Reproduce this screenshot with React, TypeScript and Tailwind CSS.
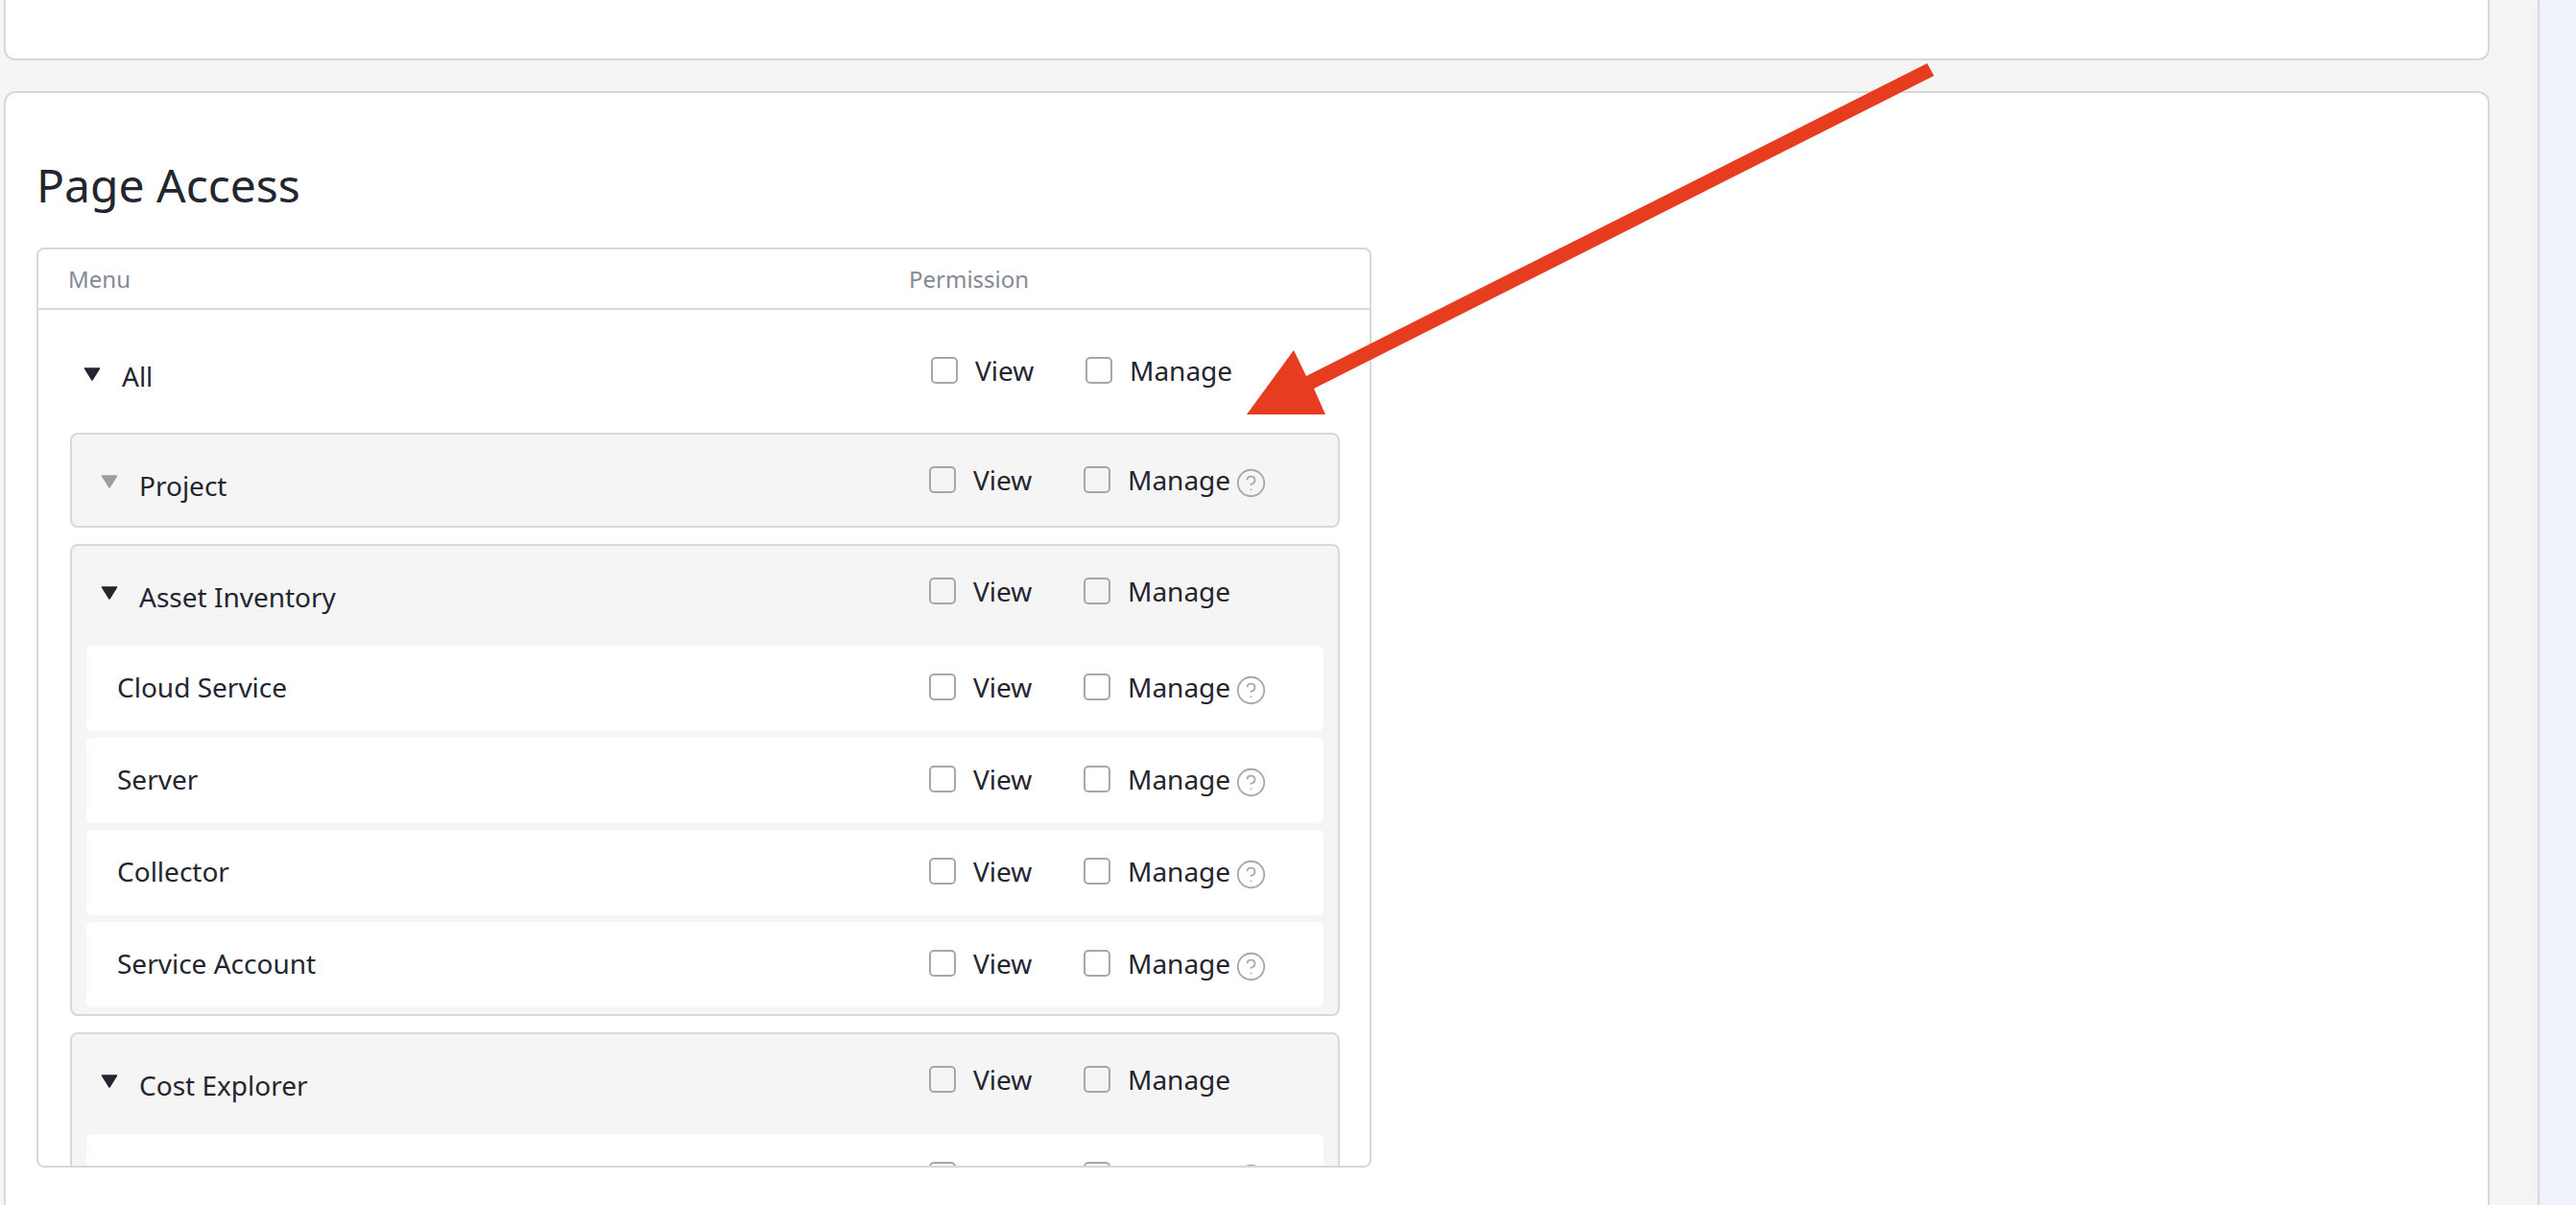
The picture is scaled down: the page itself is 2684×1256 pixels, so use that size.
import { CircleHelp } from "lucide-react";

function Caret({ muted = false, className = "" }: { muted?: boolean; className?: string }) {
  return (
    <svg width="18" height="14" viewBox="0 0 18 14" className={`shrink-0 ${className}`}>
      <path d="M1.5 1 H16.5 L9 13 Z" fill={muted ? "#9b9ca6" : "#23252f"} stroke={muted ? "#9b9ca6" : "#23252f"} strokeWidth="1.5" strokeLinejoin="round" />
    </svg>
  );
}

function Check({ label }: { label: string }) {
  return (
    <div className="flex h-[28px] items-center">
      <span className="h-[28px] w-[28px] shrink-0 rounded-[5px] border-2 border-[#a5a6af]" />
      <span className="ml-[18px] text-[28px] leading-[28px] text-[#23252f]">{label}</span>
    </div>
  );
}

function Perm({ help = false }: { help?: boolean }) {
  return (
    <div className="flex items-start">
      <div className="w-[161px]">
        <Check label="View" />
      </div>
      <Check label="Manage" />
      {help && <CircleHelp size={33} strokeWidth={1.3} color="#a5a6af" className="ml-[5px] mt-[1px] shrink-0" />}
    </div>
  );
}

function GroupHead({ title, muted = false, help = false }: { title: string; muted?: boolean; help?: boolean }) {
  return (
    <div className="flex h-[94px] items-start pt-[33px]">
      <div className="flex w-[893px] items-start pl-[30px]">
        <Caret muted={muted} className="mt-[9px]" />
        <span className="ml-[22px] mt-[6px] text-[28px] leading-[28px] text-[#23252f]">{title}</span>
      </div>
      <Perm help={help} />
    </div>
  );
}

function SubRow({ title }: { title: string }) {
  return (
    <div className="flex h-[89px] items-start rounded-[6px] bg-white pt-[29px]">
      <div className="w-[878px] pl-[32px] text-[28px] leading-[28px] text-[#23252f]">{title}</div>
      <Perm help />
    </div>
  );
}

function Group({ title, muted, help, items }: { title: string; muted?: boolean; help?: boolean; items?: string[] }) {
  return (
    <div className="rounded-[8px] border-2 border-[#d8d8d8] bg-[#f5f5f5]">
      <GroupHead title={title} muted={muted} help={help} />
      {items ? (
        <div className="flex flex-col gap-[7px] pb-[7px] pl-[15px] pr-[15px] pt-[10px]">
          {items.map((t) => (
            <SubRow key={t} title={t} />
          ))}
        </div>
      ) : (
        <div className="h-[1px]" />
      )}
    </div>
  );
}

export default function App() {
  return (
    <div className="relative flex h-[1256px] w-[2684px] overflow-hidden bg-[#f5f5f5] font-['Noto_Sans','Open_Sans',sans-serif]">
      <main className="flex w-[2644px] shrink-0 flex-col gap-[32px] pl-[4px] pr-[50px]">
        <section className="h-[63px] shrink-0 rounded-b-[12px] border-x-2 border-b-2 border-[#d8d8d8] bg-white" />
        <section className="flex-1 rounded-t-[12px] border-x-2 border-t-2 border-[#d8d8d8] bg-white pl-[32px]">
          <h1 className="ml-0 pt-[72px] text-[48px] font-normal leading-[48px] text-[#23252f]">Page Access</h1>
          <div className="mt-[41px] h-[959px] w-[1391px] overflow-hidden rounded-[8px] border-2 border-[#d8d8d8]">
            <div className="flex h-[63px] items-center border-b-2 border-[#d8d8d8] text-[24px] leading-[28px] text-[#858895]">
              <div className="w-[907px] pl-[31px]">Menu</div>
              <div>Permission</div>
            </div>
            <div className="flex h-[128px] items-start pt-[49px]">
              <div className="flex w-[930px] items-start pl-[47px]">
                <Caret className="mt-[11px]" />
                <span className="ml-[22px] mt-[6px] text-[28px] leading-[28px] text-[#23252f]">All</span>
              </div>
              <Perm />
            </div>
            <div className="flex flex-col gap-[17px] pl-[33px] pr-[31px]">
              <Group title="Project" muted help />
              <Group title="Asset Inventory" items={["Cloud Service", "Server", "Collector", "Service Account"]} />
              <Group title="Cost Explorer" items={["Dashboard", "Cost Analysis"]} />
            </div>
          </div>
        </section>
      </main>
      <aside className="flex-1 border-l-2 border-[#d8d8d8] bg-[#f0f3fc] shadow-[-4px_0_14px_rgba(0,0,0,0.025)]" />
      <svg className="pointer-events-none absolute left-0 top-0" width="2684" height="1256">
        <polygon points="2008,66 2015,79 1369,405 1381,432 1299,432 1348,365 1361,392" fill="#e63c20" />
      </svg>
    </div>
  );
}
